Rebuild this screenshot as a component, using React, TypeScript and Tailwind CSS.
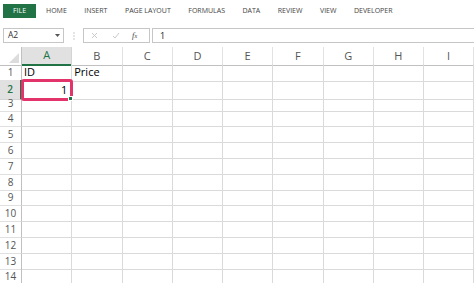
import React from 'react';

const COLS = ['A', 'B', 'C', 'D', 'E', 'F', 'G', 'H', 'I'];
const ROWS = Array.from({ length: 14 }, (_, i) => i + 1);
const TABS = ['HOME', 'INSERT', 'PAGE LAYOUT', 'FORMULAS', 'DATA', 'REVIEW', 'VIEW', 'DEVELOPER'];

const GRID = 'grid grid-cols-[22px_repeat(9,50.25px)]';

function Ribbon() {
  return (
    <div className="flex h-[18px] items-end pl-[3px]">
      <div className="flex h-[14px] w-[33px] items-center justify-center bg-[#217346] text-[7px] text-white">
        FILE
      </div>
      <div className="flex h-[14px] items-center gap-[17.5px] pl-[10px] text-[7px] text-[#444]">
        {TABS.map((t) => (
          <span key={t}>{t}</span>
        ))}
      </div>
    </div>
  );
}

function FormulaBar() {
  return (
    <div className="mt-[10px] flex h-[15px] items-stretch">
      {/* name box */}
      <div className="ml-[3px] flex w-[61px] items-center justify-between border border-[#c6c6c6] pl-[4px] pr-[3px] text-[8.5px] text-[#333]">
        <span>A2</span>
        <svg width="5" height="3" viewBox="0 0 5 3">
          <path d="M0 0h5L2.5 3z" fill="#555" />
        </svg>
      </div>
      <div className="flex w-[19px] items-center justify-center">
        <svg width="2" height="8" viewBox="0 0 2 8">
          <circle cx="1" cy="1" r="0.7" fill="#b8b8b8" />
          <circle cx="1" cy="4" r="0.7" fill="#b8b8b8" />
          <circle cx="1" cy="7" r="0.7" fill="#b8b8b8" />
        </svg>
      </div>
      {/* cancel / enter / fx */}
      <div className="flex w-[67px] items-center border border-[#c6c6c6] pl-[7px]">
        <svg width="7" height="7" viewBox="0 0 7 7">
          <path d="M1 1l5 5M6 1l-5 5" stroke="#c4c4c4" strokeWidth="0.9" />
        </svg>
        <svg width="8" height="7" viewBox="0 0 8 7" className="ml-[14px]">
          <path d="M1 4l2 2 4-5" stroke="#c4c4c4" strokeWidth="0.9" fill="none" />
        </svg>
        <span className="ml-[12px] font-['Liberation_Serif',serif] text-[8.5px] italic text-[#444]">
          f<span className="text-[6px]">x</span>
        </span>
      </div>
      <div className="ml-[2px] flex flex-1 items-center border border-r-0 border-[#c6c6c6] pl-[7px] text-[9px] text-[#222]">
        1
      </div>
    </div>
  );
}

function Sheet() {
  return (
    <div className="mt-[4px]">
      {/* column headers */}
      <div className={`${GRID} h-[17px]`}>
        <div className="relative border-b border-r border-[#c0c0c0]">
          <svg width="10" height="10" viewBox="0 0 10 10" className="absolute bottom-[2px] right-[2px]">
            <path d="M10 0v10H0z" fill="#dcdcdc" />
          </svg>
        </div>
        {COLS.map((c) => (
          <div
            key={c}
            className={
              c === 'A'
                ? 'flex items-center justify-center border-b-2 border-r border-b-[#217346] border-r-[#d4d4d4] bg-[#e1e1e1] text-[11px] text-[#217346]'
                : 'flex items-center justify-center border-b border-r border-b-[#c0c0c0] border-r-[#e2e2e2] text-[11px] text-[#555]'
            }
          >
            {c}
          </div>
        ))}
      </div>
      {ROWS.map((r) => (
        <div key={r} className={`${GRID} h-[15.8px]`}>
          <div
            className={
              r === 2
                ? 'flex items-center justify-center border-b border-r-2 border-b-[#d4d4d4] border-r-[#217346] bg-[#e1e1e1] text-[10px] font-semibold text-[#217346]'
                : 'flex items-center justify-center border-b border-r border-b-[#e0e0e0] border-r-[#c0c0c0] text-[10px] text-[#555]'
            }
          >
            {r}
          </div>
          {COLS.map((c) => {
            const sel = r === 2 && c === 'A';
            let text = '';
            if (r === 1 && c === 'A') text = 'ID';
            if (r === 1 && c === 'B') text = 'Price';
            if (sel) text = '1';
            return (
              <div
                key={c}
                className={
                  sel
                    ? 'relative z-10 flex items-center justify-end border-2 border-[#217346] pr-[3px] text-[11px] text-black'
                    : 'flex items-center overflow-visible whitespace-nowrap border-b border-r border-[#dadada] pl-[2px] text-[11px] text-black'
                }
              >
                {text}
                {sel && (
                  <>
                    <div className="absolute -bottom-[3px] -left-[3px] -right-[3px] -top-[3px] rounded-[3px] border-[3px] border-[#e3336b]" />
                    <div className="absolute -bottom-[3px] -right-[3px] h-[5px] w-[5px] border border-white bg-[#217346]" />
                  </>
                )}
              </div>
            );
          })}
        </div>
      ))}
    </div>
  );
}

export default function App() {
  return (
    <div className="relative h-[283px] w-[474px] overflow-hidden bg-white font-['Open_Sans',sans-serif]">
      <Ribbon />
      <FormulaBar />
      <Sheet />
    </div>
  );
}
